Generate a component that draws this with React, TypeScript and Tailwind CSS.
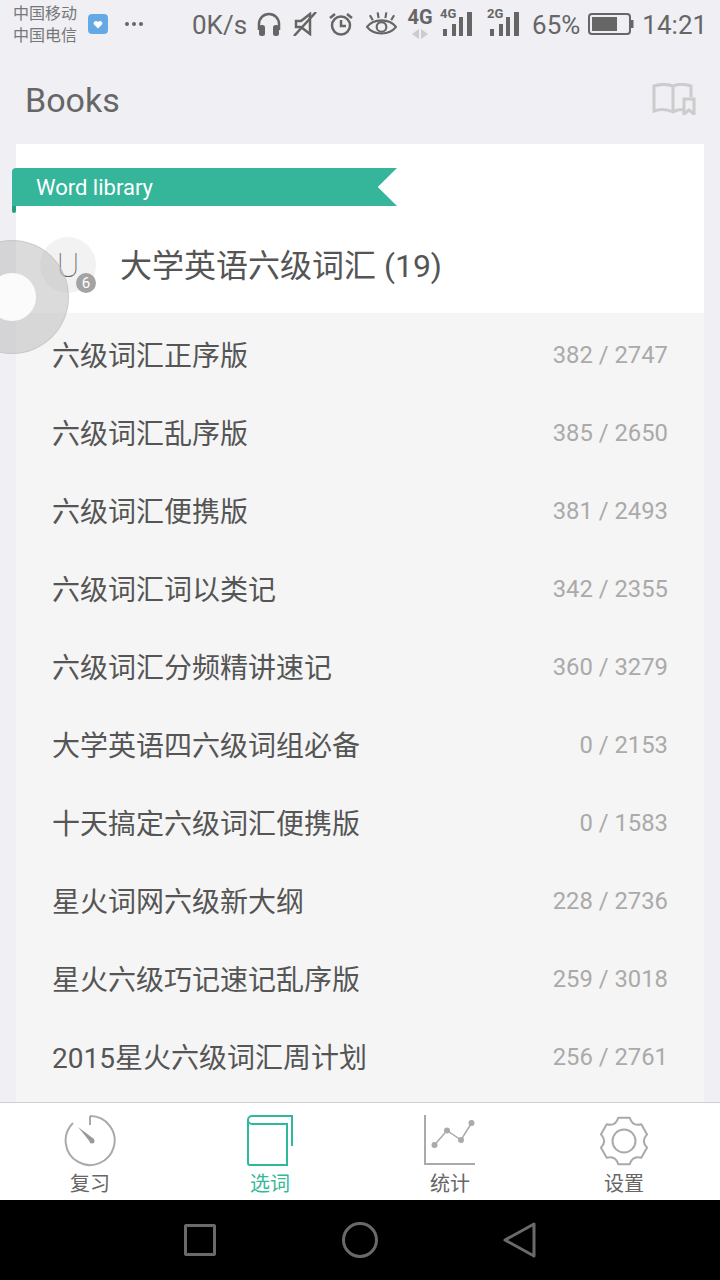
import React from 'react';

const books = [
  { name: '六级词汇正序版', count: '382 / 2747' },
  { name: '六级词汇乱序版', count: '385 / 2650' },
  { name: '六级词汇便携版', count: '381 / 2493' },
  { name: '六级词汇词以类记', count: '342 / 2355' },
  { name: '六级词汇分频精讲速记', count: '360 / 3279' },
  { name: '大学英语四六级词组必备', count: '0 / 2153' },
  { name: '十天搞定六级词汇便携版', count: '0 / 1583' },
  { name: '星火词网六级新大纲', count: '228 / 2736' },
  { name: '星火六级巧记速记乱序版', count: '259 / 3018' },
  { name: '2015星火六级词汇周计划', count: '256 / 2761' },
];

// six scalloped teeth around the centre of the settings icon
const gearPath = () => {
  const pt = (deg: number, r: number) => {
    const a = (deg * Math.PI) / 180;
    return `${(24 + r * Math.cos(a)).toFixed(1)} ${(25 + r * Math.sin(a)).toFixed(1)}`;
  };
  let d = '';
  for (let i = 0; i < 6; i++) {
    const c = -90 + i * 60;
    d += `${i === 0 ? 'M' : 'L'}${pt(c - 14, 24)} L${pt(c + 14, 24)} Q${pt(c + 30, 16.5)} ${pt(c + 46, 24)} `;
  }
  return d + 'Z';
};

const Signal = ({ label }: { label: string }) => (
  <svg width="33" height="38" viewBox="0 0 33 38" className="shrink-0">
    <text x="0" y="13" fontSize="13" fontWeight="700" fill="#666" fontFamily="Roboto, sans-serif">{label}</text>
    <rect x="3" y="24" width="4" height="7" fill="#666" />
    <rect x="12" y="19" width="4" height="12" fill="#666" />
    <rect x="19" y="12" width="4" height="19" fill="#666" />
    <rect x="27" y="7" width="5" height="24" fill="#666" />
  </svg>
);

const StatusBar = () => (
  <div className="h-12 flex items-center text-[#666] pl-[13px] shrink-0">
    <div className="w-[63px] shrink-0 mt-[2px] text-[16px] leading-[22px] text-[#777] whitespace-nowrap">
      <div>中国移动</div>
      <div>中国电信</div>
    </div>
    <div className="ml-3 w-5 h-5 rounded bg-[#64a9e6] flex items-center justify-center shrink-0">
      <svg width="10" height="9" viewBox="0 0 10 9"><path d="M5 8.500 1 4.500C-.5 2.500 2.500-.5 5 2c2.500-2.500 5.500.5 4 2.500Z" fill="#fff" /></svg>
    </div>
    <svg width="20" height="6" viewBox="0 0 20 6" className="ml-[16px] shrink-0">
      <circle cx="3" cy="3" r="2" fill="#666" /><circle cx="10" cy="3" r="2" fill="#666" /><circle cx="17" cy="3" r="2" fill="#666" />
    </svg>
    <span className="ml-[48px] mt-[2px] text-[26px] leading-none">0K/s</span>
    <svg width="24" height="24" viewBox="0 0 24 24" className="ml-[10px] shrink-0" fill="none" stroke="#666" strokeWidth="2.500">
      <path d="M2 18v-6a10 10 0 0 1 20 0v6" />
      <rect x="2" y="13" width="6" height="11" rx="2.500" fill="#666" stroke="none" />
      <rect x="16" y="13" width="6" height="11" rx="2.500" fill="#666" stroke="none" />
    </svg>
    <svg width="24" height="24" viewBox="0 0 24 24" className="ml-[12px] shrink-0" fill="none" stroke="#666" strokeWidth="2.500">
      <path d="M3 9h5l9-7v20l-9-7H3Z" />
      <path d="M1 24 23 0" />
    </svg>
    <svg width="24" height="24" viewBox="0 0 24 24" className="ml-[12px] shrink-0" fill="none" stroke="#666" strokeWidth="2.500">
      <circle cx="12" cy="13.500" r="9" />
      <path d="M12 8v6h5M1 6l5-4M23 6l-5-4" />
    </svg>
    <svg width="31" height="26" viewBox="0 0 32 26" className="ml-[13px] shrink-0" fill="none" stroke="#666" strokeWidth="2.200">
      <path d="M1 16c7-9 23-9 30 0-7 9-23 9-30 0Z" />
      <circle cx="16" cy="16" r="5" />
      <path d="M7 9 4 4M13 7l-1-6M20 7l1-6M26 9l3-5" />
    </svg>
    <div className="ml-[10px] w-[26px] flex flex-col items-center shrink-0">
      <span className="text-[20px] font-bold leading-[17px]">4G</span>
      <svg width="18" height="10" viewBox="0 0 18 10" className="mt-[3px]"><path d="M8 0v10L1 5ZM10 0v10l7-5Z" fill="#ccc" /></svg>
    </div>
    <div className="ml-[7px] shrink-0"><Signal label="4G" /></div>
    <div className="ml-[14px] shrink-0"><Signal label="2G" /></div>
    <span className="ml-[12px] mt-[2px] text-[26px] leading-none">65%</span>
    <svg width="46" height="24" viewBox="0 0 46 24" className="ml-[8px] shrink-0">
      <rect x="1" y="2" width="41" height="20" rx="3" fill="none" stroke="#666" strokeWidth="2" />
      <rect x="4" y="5" width="25" height="14" fill="#666" />
      <rect x="43" y="8" width="2.500" height="8" fill="#666" />
    </svg>
    <span className="ml-[8px] mt-[2px] text-[26px] leading-none">14:21</span>
  </div>
);

const tabLabel = 'text-[20px] leading-[24px] mt-[5px]';

const BottomNav = () => (
  <div className="h-[98px] bg-white border-t border-[#cfcfcf] flex shrink-0">
    <div className="w-[180px] flex flex-col items-center pt-[12px]">
      <svg width="52" height="52" viewBox="0 0 52 52" fill="none">
        <path d="M26 1a24.500 24.500 0 1 1-17 7" stroke="#aaa" strokeWidth="2" />
        <path d="M26 1v9" stroke="#aaa" strokeWidth="2" />
        <path d="M14 12 30 24l-3 4Z" fill="#999" />
        <circle cx="28" cy="26" r="2.500" fill="#999" />
      </svg>
      <span className={tabLabel + ' text-[#666]'}>复习</span>
    </div>
    <div className="w-[180px] flex flex-col items-center pt-[12px]">
      <svg width="48" height="52" viewBox="0 0 48 52" fill="none" stroke="#2fb99c" strokeWidth="2">
        <path d="M46 31V1H6a4 4 0 0 0-4 4v43a2 2 0 0 0 2 2h37V9H6a4 4 0 0 1-4-4" />
      </svg>
      <span className={tabLabel + ' text-[#35b89a]'}>选词</span>
    </div>
    <div className="w-[180px] flex flex-col items-center pt-[12px]">
      <svg width="52" height="52" viewBox="0 0 52 52" fill="none" stroke="#aaa">
        <path d="M1 0v49h50" strokeWidth="2" />
        <path d="M10.500 30 23 15.500 37 25 47.500 8" strokeWidth="1.500" />
        <circle cx="10.500" cy="30" r="3" fill="#aaa" stroke="none" />
        <circle cx="23" cy="15.500" r="3" fill="#aaa" stroke="none" />
        <circle cx="37" cy="25" r="3" fill="#aaa" stroke="none" />
        <circle cx="47.500" cy="8" r="3" fill="#aaa" stroke="none" />
      </svg>
      <span className={tabLabel + ' text-[#666]'}>统计</span>
    </div>
    <div className="w-[180px] flex flex-col items-center pt-[12px] pr-[12px]">
      <svg width="48" height="52" viewBox="0 0 48 50" fill="none" stroke="#aaa" strokeWidth="2">
        <path d={gearPath()} strokeLinejoin="round" />
        <circle cx="24" cy="25" r="11.500" />
      </svg>
      <span className={tabLabel + ' text-[#666]'}>设置</span>
    </div>
  </div>
);

export default function App() {
  return (
    <div className="relative w-[720px] h-[1280px] overflow-hidden flex flex-col bg-[#efeff4] font-['Roboto','Noto_Sans_CJK_SC',sans-serif]">
      <StatusBar />

      <div className="h-24 flex items-center justify-between pt-[6px] pl-[25px] pr-[24px] shrink-0">
        <span className="mt-[2px] text-[34px] text-[#666]">Books</span>
        <svg width="44" height="32" viewBox="0 0 44 32" fill="none" stroke="#ccc" strokeWidth="3">
          <path d="M21 29V3C15 1 8 1 2 3v25c6-2 13-2 19 1 3-2 7-2.500 10-2.500M21 3c5-2 12-2 18 0v11" />
          <path d="M32 16h10v15l-5-4-5 4Z" />
        </svg>
      </div>

      <div className="flex-1 min-h-0 mx-4 flex flex-col">
        <div className="h-[169px] bg-white shrink-0 pt-6">
          <div className="relative ml-[-4px] w-[385px] h-[45px]">
            <div className="h-[38px] bg-[#35b59a] [clip-path:polygon(0_0,100%_0,95%_50%,100%_100%,0_100%)] flex items-center pl-[24px] rounded-tl-sm">
              <span className="mt-[2px] text-[22px] text-white leading-none">Word library</span>
            </div>
            <div className="absolute left-0 top-[38px] w-1 h-[7px] bg-[#2a9c84] rounded-b-sm" />
          </div>
          <div className="ml-[24px] mt-[24px] flex items-center">
            <div className="relative w-14 h-14 rounded-full bg-[#f2f2f2] flex items-center justify-center shrink-0">
              <span className="text-[34px] font-thin text-[#666] leading-none">U</span>
              <span className="absolute right-0 bottom-0 w-5 h-5 rounded-full bg-[#a3a3a3] text-white text-[15px] leading-5 text-center">6</span>
            </div>
            <span className="ml-[24px] mt-[2px] text-[32px] text-[#555] leading-none whitespace-nowrap">大学英语六级词汇 (19)</span>
          </div>
        </div>
        <div className="flex-1 min-h-0 bg-[#f5f5f5] pt-[3px] overflow-hidden">
          {books.map((b) => (
            <div key={b.name} className="h-[78px] flex items-center justify-between pl-9 pr-9">
              <span className="pt-[4px] text-[28px] text-[#555] whitespace-nowrap">{b.name}</span>
              <span className="pt-[2px] text-[23.8px] text-[#aaa] whitespace-nowrap">{b.count}</span>
            </div>
          ))}
        </div>
      </div>

      <BottomNav />

      <div className="h-20 bg-black flex items-center shrink-0">
        <div className="w-[400px] flex justify-center"><div className="w-[32px] h-[32px] border-[3px] border-[#6a6a6a] rounded-[2px]" /></div>
        <div className="w-0 flex justify-center ml-[-40px]"><div className="w-9 h-9 shrink-0 border-[3px] border-[#6a6a6a] rounded-full" /></div>
        <svg width="34" height="36" viewBox="0 0 34 36" className="ml-[143px]" fill="none" stroke="#6a6a6a" strokeWidth="3" strokeLinejoin="round">
          <path d="M31 2v32L2 18Z" />
        </svg>
      </div>

      {/* floating assistive ball */}
      <div className="absolute left-[-45px] top-[240px] w-[114px] h-[114px] rounded-full bg-[#bdbdbd]/55 border border-[#bbb]/50 flex items-center justify-center">
        <div className="w-12 h-12 rounded-full bg-white/90" />
      </div>
    </div>
  );
}
